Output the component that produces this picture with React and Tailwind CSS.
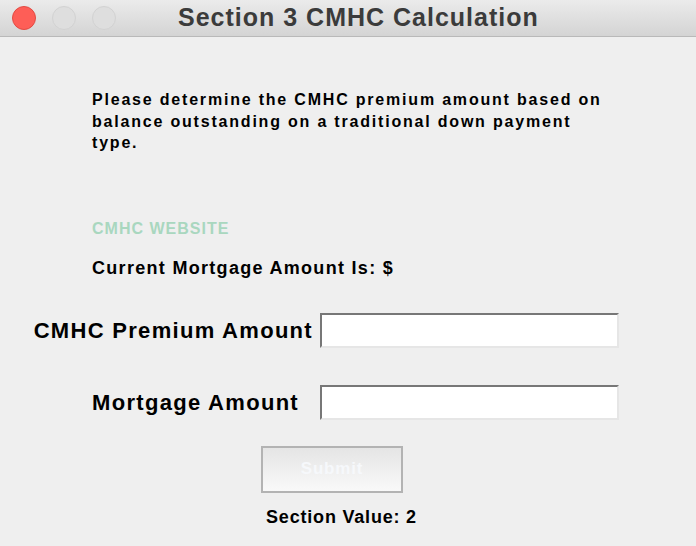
import React from "react";

const font = { fontFamily: '"Liberation Sans", Arial, sans-serif' };

function Light({ className }) {
  return <span className={`block h-[24px] w-[24px] rounded-full border ${className}`} />;
}

function Field() {
  return (
    <div className="h-[35px] w-[299px] border-2 border-t-[#777] border-l-[#777] border-r-[#e6e6e6] border-b-[#e6e6e6] bg-white" />
  );
}

export default function App() {
  return (
    <div
      className="flex h-[546px] w-[696px] flex-col overflow-hidden bg-[#efefef] text-black"
      style={font}
    >
      {/* title bar */}
      <div className="flex h-[37px] shrink-0 items-center border-b border-[#b9b9b9] bg-gradient-to-b from-[#ebebeb] to-[#d4d4d4]">
        <div className="flex w-[116px] items-center gap-4 pl-3">
          <Light className="border-[#e24b43] bg-[#fe5e57]" />
          <Light className="border-[#d2d2d2] bg-[#dedede]" />
          <Light className="border-[#d2d2d2] bg-[#dedede]" />
        </div>
        <div className="ml-[62px] text-[25px] font-bold tracking-[1px] text-[#3b3b3b]">
          Section 3 CMHC Calculation
        </div>
      </div>

      {/* body */}
      <div className="flex flex-col pl-[92px] pt-[52px]">
        <p className="w-[518px] text-[16px] font-bold leading-[21.5px] tracking-[1.8px]">
          Please determine the CMHC premium amount based on balance outstanding on a traditional
          down payment type.
        </p>
        <div className="mt-[65px] text-[16px] font-bold leading-[20px] tracking-[1px] text-[#a9d7bf]">
          CMHC WEBSITE
        </div>
        <div className="mt-[19px] text-[18px] font-bold leading-[20px] tracking-[1.3px]">
          Current Mortgage Amount Is: $
        </div>
      </div>

      <div className="mt-[35px] flex flex-col gap-[37px]">
        <div className="flex items-center">
          <label className="w-[320px] pr-[7px] text-right text-[22px] font-bold tracking-[1.3px]">
            CMHC Premium Amount
          </label>
          <Field />
        </div>
        <div className="flex items-center">
          <label className="w-[320px] pr-[21px] text-right text-[22px] font-bold tracking-[1.3px]">
            Mortgage Amount
          </label>
          <Field />
        </div>
      </div>

      <div className="mt-[26px] flex flex-col items-center">
        <button className="ml-[-32px] h-[47px] w-[142px] border-2 border-[#b3b3b3] bg-gradient-to-b from-[#e5e5e5] to-[#f9f9f9] text-[17px] font-bold tracking-[0.8px] text-[#f6f8fb]">
          Submit
        </button>
        <div className="ml-[-13px] mt-[11px] text-[18px] font-bold tracking-[0.8px]">
          Section Value: 2
        </div>
      </div>
    </div>
  );
}
